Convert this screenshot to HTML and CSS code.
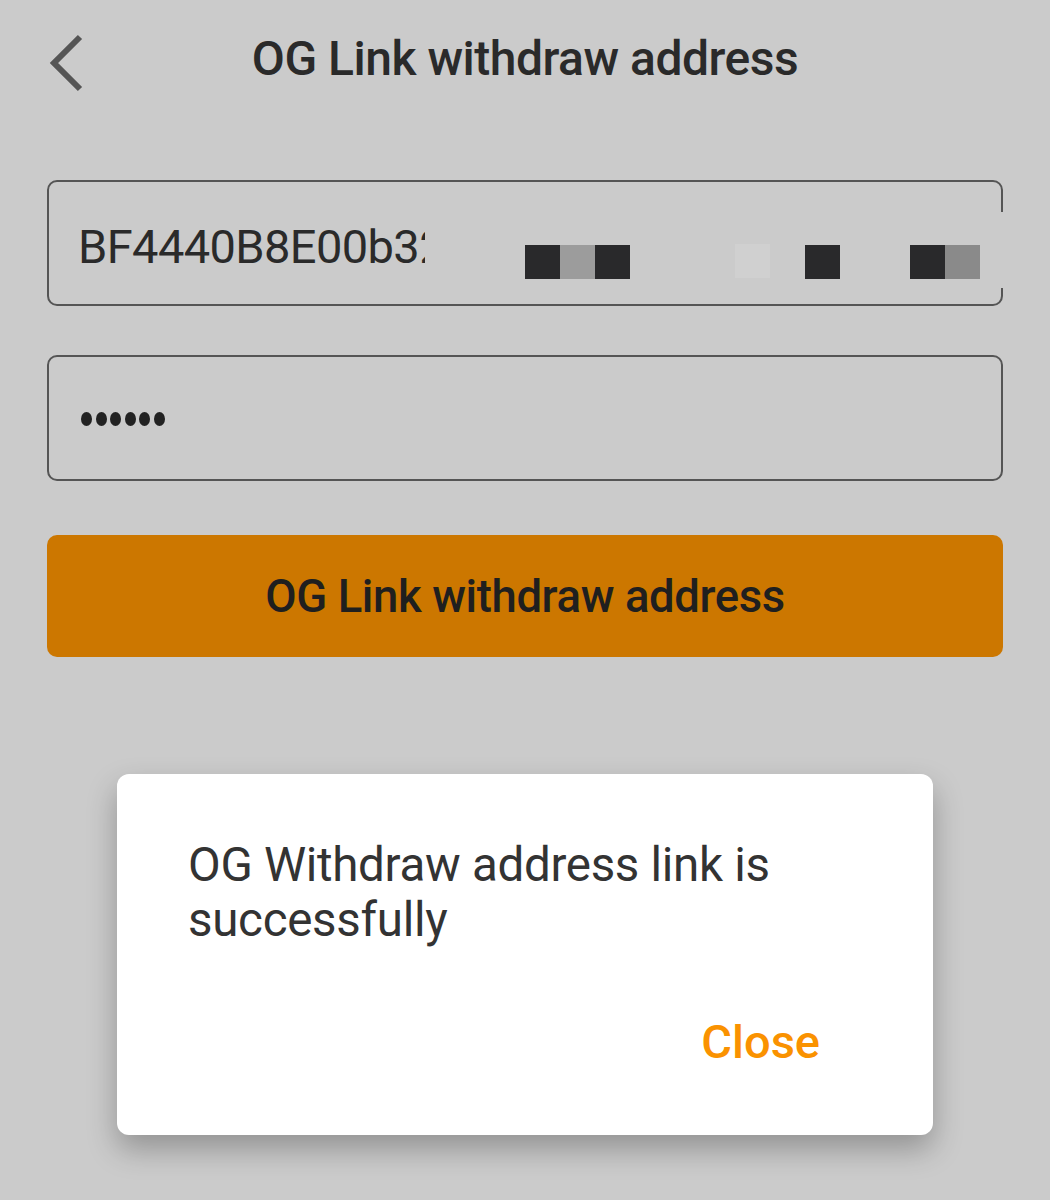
FILE: index.html
```html
<!DOCTYPE html>
<html lang="en">
<head>
    <meta charset="UTF-8">
    <meta name="viewport" content="width=device-width, initial-scale=1.0">
    <title>OG Link withdraw address</title>
    <link rel="stylesheet" href="styles.css">
</head>
<body>
    <header class="top-bar">
        <a class="back-btn" href="#">
            <svg width="40" height="58" viewBox="0 0 40 58">
                <polyline points="34,3 8,29 34,55" fill="none" stroke="#555555" stroke-width="6"/>
            </svg>
        </a>
        <h1 class="page-title">OG Link withdraw address</h1>
    </header>

    <main class="form">
        <div class="field field-address">
            <span class="field-text address-text">BF4440B8E00b32</span>
            <!-- masked part of the address -->
            <div class="mask">
                <i class="px dark" style="left:525px"></i>
                <i class="px mid" style="left:560px"></i>
                <i class="px dark" style="left:595px"></i>
                <i class="px faint" style="left:735px"></i>
                <i class="px dark" style="left:805px"></i>
                <i class="px dark" style="left:910px"></i>
                <i class="px grey" style="left:945px"></i>
            </div>
            <div class="edge-cover"></div>
        </div>
        <div class="field">
            <span class="dots" aria-label="password">
                <i></i><i></i><i></i><i></i><i></i><i></i>
            </span>
        </div>
        <button class="submit-btn">OG Link withdraw address</button>
    </main>

    <div class="dialog">
        <p class="dialog-msg">OG Withdraw address link is successfully</p>
        <div class="dialog-actions">
            <button class="dialog-close">Close</button>
        </div>
    </div>
</body>
</html>
```

FILE: styles.css
```css
body {
    background-color: #cbcbcb;
    color: #2e2e2e;
    font-family: Roboto, "Noto Sans", sans-serif;
    margin: 0;
    padding: 0;
    width: 1050px;
    height: 1200px;
    position: relative;
    overflow: hidden;
}

.top-bar {
    height: 116px;
    display: flex;
    align-items: center;
    justify-content: center;
    position: relative;
}
.back-btn {
    position: absolute;
    left: 46px;
    top: 34px;
    display: block;
}
.page-title {
    margin: 0;
    font-size: 48px;
    font-weight: 500;
    color: #2a2a2a;
    letter-spacing: -0.5px;
}

.form {
    padding: 64px 47px 0;
    display: flex;
    flex-direction: column;
}
.field {
    height: 122px;
    border: 2px solid #555555;
    border-radius: 10px;
    display: flex;
    align-items: center;
    padding: 0 29px;
    margin-bottom: 49px;
    position: relative;
}
.field:nth-child(2) {
    margin-bottom: 54px;
}
.field-text {
    font-size: 47px;
    color: #2a2a2a;
    letter-spacing: -0.6px;
}
/* long address is cut at the field's text box */
.address-text {
    width: 347px;
    overflow: hidden;
    white-space: nowrap;
    margin-top: 6px;
}

/* password mask */
.dots {
    display: flex;
    gap: 3.5px;
    margin: 2px 0 0 3px;
}
.dots i {
    display: block;
    width: 11px;
    height: 14px;
    border-radius: 50%;
    background: #222222;
}

/* pixel blocks hiding the rest of the address */
.mask {
    position: absolute;
    left: -49px;
    top: 63px;
}
.px {
    position: absolute;
    top: 0;
    width: 35px;
    height: 34px;
    display: block;
}
.px.dark { background: #29292b; }
.px.mid { background: #9c9c9c; }
.px.grey { background: #8a8a8a; }
.px.faint { background: #d0d0d0; top: -1px; }
.edge-cover {
    position: absolute;
    right: -3px;
    top: 30px;
    width: 6px;
    height: 76px;
    background: #cbcbcb;
}

.submit-btn {
    height: 122px;
    border: none;
    border-radius: 10px;
    background-color: #cc7700;
    color: #1f1f1f;
    font-family: Roboto, sans-serif;
    font-size: 45.5px;
    font-weight: 500;
    letter-spacing: -0.4px;
    padding: 0;
}

.dialog {
    position: absolute;
    left: 117px;
    top: 774px;
    width: 816px;
    height: 361px;
    background: #ffffff;
    border-radius: 12px;
    box-shadow: 0 14px 30px rgba(0, 0, 0, 0.28);
    box-sizing: border-box;
    padding: 64px 71px 0;
}
.dialog-msg {
    margin: 0;
    font-size: 47.5px;
    line-height: 55px;
    color: #333333;
    letter-spacing: -0.3px;
    width: 640px;
}
.dialog-actions {
    display: flex;
    justify-content: flex-end;
    margin-top: 66px;
}
.dialog-close {
    border: none;
    background: none;
    padding: 0 42px 0 0;
    font-family: Roboto, sans-serif;
    font-size: 47px;
    font-weight: 500;
    color: #fa9200;
}
```
